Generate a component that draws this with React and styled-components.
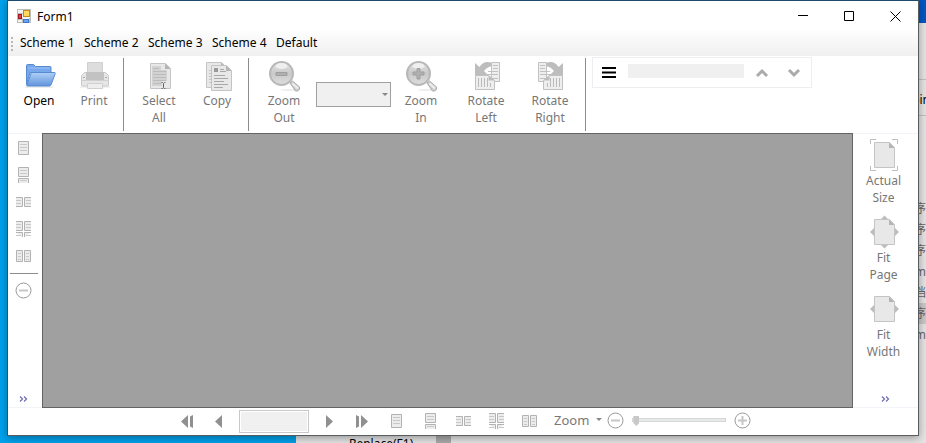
import React from "react";
import styled, { createGlobalStyle } from "styled-components";

const Global = createGlobalStyle`
  * { box-sizing: border-box; }
  html, body, #root { margin: 0; height: 100%; }
  body { overflow: hidden; font: 13px/17px "Noto Sans", "Noto Sans CJK SC", sans-serif; color: #000; }
  button, input, select { font: inherit; color: inherit; }
  button { border: 0; padding: 0; background: none; }
  svg { display: block; flex: none; }
`;

const Desktop = styled.div`
  position: relative;
  height: 100vh;
  padding: 0 7px 7px;
  background: linear-gradient(90deg, #00a2ec, #009de6);
`;

const BackApp = styled.div`
  position: absolute;
  top: 0;
  bottom: 0;
  left: 296px;
  right: 0;
  background: #e4e4e4;
  overflow: hidden;
`;

const BackTitle = styled.div`
  height: 23px;
  background: #0058c4;
`;

const BackField = styled.div`
  margin-top: 56px;
  margin-right: -4px;
  height: 37px;
  padding-top: 11px;
  border: solid #c0c0c0;
  border-width: 1px 0;
  text-align: right;
  font-size: 12px;
  line-height: 17px;
`;

const BackList = styled.div`
  display: flex;
  flex-direction: column;
  align-items: flex-end;
  margin-top: 82px;
  font-size: 12px;
  line-height: 21px;
`;

const BackRow = styled.div`
  width: 100%;
  height: 21px;
  text-align: right;
  color: #666;
  background: ${(p) => (p.$selected ? "#c8c8c8" : "transparent")};
`;

const BackFooter = styled.div`
  position: absolute;
  left: 53px;
  bottom: -9px;
  font-size: 12px;
  line-height: 17px;
`;

const BackScroll = styled.div`
  position: absolute;
  left: 140px;
  bottom: 0;
  width: 15px;
  height: 8px;
  background: #aaa;
`;

const Window = styled.main`
  position: relative;
  display: flex;
  flex-direction: column;
  height: 100%;
  border: 1px solid #5a5d60;
  border-top-color: #1a4a6c;
  border-left-color: #12577c;
  background: #fff;
  box-shadow: 0 2px 8px rgba(0, 0, 0, 0.35);
`;

const TitleBar = styled.header`
  display: flex;
  align-items: center;
  height: 30px;
  padding-left: 9px;
`;

const Title = styled.h1`
  flex: 1;
  margin: 0 0 0 5px;
  font-size: 12px;
  font-weight: 400;
  line-height: 17px;
`;

const CaptionButton = styled.button`
  display: grid;
  place-items: center;
  width: 46px;
  height: 28px;
`;

const MenuBar = styled.nav`
  display: flex;
  align-items: center;
  gap: 8px;
  height: 25px;
  padding-left: 3px;
  background: linear-gradient(#fdfdfd, #f0f0f0);
`;

const Grip = styled.span`
  width: 2px;
  height: 14px;
  margin-right: -1px;
  background: repeating-linear-gradient(#b8b8b8 0 2px, transparent 2px 4px);
`;

const MenuItem = styled.button`
  min-width: 56px;
  height: 19px;
  padding-bottom: 2px;
  font-size: 12px;
  text-align: left;
  white-space: nowrap;
`;

const Toolbar = styled.div`
  display: flex;
  height: 77px;
  padding: 2px 3px 0;
`;

const Divider = styled.div`
  width: 1px;
  height: 73px;
  margin-left: ${(p) => p.$before || 0}px;
  margin-right: ${(p) => p.$after || 0}px;
  background: #8c8c8c;
`;

const Tool = styled.button`
  display: flex;
  flex-direction: column;
  align-items: center;
  width: ${(p) => p.$width}px;
  height: 73px;
  padding-top: 2px;
  font-size: 12px;
  line-height: 17px;
  color: ${(p) => (p.$enabled ? "#000" : "#777")};
`;

const ToolLabel = styled.span`
  width: min-content;
`;

const ZoomBox = styled.div`
  position: relative;
  display: flex;
  align-items: center;
  width: 75px;
  height: 25px;
  margin-top: 24px;
`;

const ZoomSelect = styled.select`
  appearance: none;
  width: 100%;
  height: 100%;
  border: 1px solid #a0a0a0;
  border-radius: 0;
  background: #f0f0f0;
  opacity: 1;
`;

const SelectArrow = styled.span`
  position: absolute;
  right: 3px;
  pointer-events: none;
`;

const Search = styled.form`
  display: flex;
  align-items: center;
  width: 220px;
  height: 31px;
  margin-left: 6px;
  margin-top: -1px;
  padding-left: 8px;
  border: 1px solid #eeeef2;
`;

const SearchButton = styled.button`
  display: grid;
  place-items: center;
  width: ${(p) => p.$width || 32}px;
  height: 28px;
`;

const SearchInput = styled.input`
  width: 116px;
  height: 14px;
  margin: 0 2px 3px 11px;
  border: 0;
  background: #f0f0f0;
`;

const Workspace = styled.div`
  display: flex;
  flex: 1;
  min-height: 0;
`;

const SideBar = styled.aside`
  display: flex;
  flex-direction: column;
  align-items: center;
  width: ${(p) => p.$width}px;
  padding-top: ${(p) => p.$top}px;
  border: solid #f3f4fa;
  border-width: 1px 0;
`;

const SideButton = styled.button`
  display: grid;
  place-items: center;
  width: 30px;
  height: 27px;
  margin-right: 4px;
`;

const SideLine = styled.div`
  width: 28px;
  height: 1px;
  margin: 3px 3px 3px 0;
  background: #8c8c8c;
`;

const More = styled.button`
  height: 17px;
  margin: auto ${(p) => p.$right || 0}px 0 0;
`;

const Canvas = styled.section`
  flex: 1;
  border: 1px solid #646464;
  background: #a0a0a0;
`;

const FitTool = styled(Tool)`
  height: 77px;
  margin-right: 4px;
`;

const StatusBar = styled.footer`
  display: flex;
  align-items: center;
  height: 27px;
  padding-left: 162px;
`;

const NavButton = styled.button`
  display: grid;
  place-items: center;
  width: ${(p) => p.$width || 33}px;
  height: 24px;
`;

const PageInput = styled.input`
  width: 70px;
  height: 23px;
  margin: 0 3px 0 5px;
  padding: 0 2px;
  border: 1px solid #c8c8c8;
  background: #f0f0f0;
  box-shadow: inset 0 0 0 1px #fff;
`;

const ZoomMenu = styled.button`
  display: flex;
  align-items: center;
  gap: 7px;
  height: 20px;
  margin: 0 5px 3px 8px;
  color: #777;
`;

const Slider = styled.input`
  appearance: none;
  width: 94px;
  height: 16px;
  margin: 0 8px 3px;
  background: none;
  &::-webkit-slider-runnable-track {
    height: 4px;
    border: 1px solid #d6d6d6;
    background: #e7eaea;
  }
  &::-webkit-slider-thumb {
    appearance: none;
    width: 6px;
    height: 10px;
    margin-top: -3px;
    background: #c8c8c8;
    clip-path: polygon(0 0, 100% 0, 100% 70%, 50% 100%, 0 70%);
  }
`;

const StatusIconButton = styled.button`
  padding-bottom: 2px;
`;

const AppIcon = () => (
  <svg width="15" height="15" viewBox="0 0 15 15" shapeRendering="crispEdges">
    <path d="M.5.5h13v13H.5z" fill="#f2f2f2" stroke="#bdbdbd" />
    <path d="M.5 4.500h6M.5 10.500h6M5.500 9v5M12.500 9v5" stroke="#bdbdbd" />
    <path d="M1.500 5.500h3v4h-3z" fill="#e04040" stroke="#a01818" />
    <path d="M6.500 1.500h6v6h-6z" fill="#ffd860" stroke="#c28b18" />
    <path d="M6.500 10.500h5v3h-5z" fill="#66a4f4" stroke="#3f76c8" />
  </svg>
);

const OpenIcon = () => (
  <svg width="34" height="32" viewBox="0 0 34 32">
    <defs><linearGradient id="folder" x1="0" y1="0" x2="0" y2="1"><stop stopColor="#b0cff8" /><stop offset="1" stopColor="#6294dc" /></linearGradient></defs>
    <path d="M3 26h28v2H3z" fill="#eee" />
    <path d="M4.500 5.500q0-1 1-1h6l2 2h14.500q1 0 1 1v5H8l-3.500 12z" fill="#78a8ec" stroke="#568bd1" />
    <path d="M6 8h22" stroke="#9dc0f3" />
    <path d="M9 13.500q.5-1 1.500-1h22q1 0 .7 1l-4 11q-.5 1.500-2 1.500H5.500q-1 0-.6-1z" fill="url(#folder)" stroke="#568bd1" />
  </svg>
);

const PrintIcon = () => (
  <svg width="32" height="32" viewBox="0 0 32 32">
    <path d="M2 26h30v2H2z" fill="#f1f1f1" />
    <path d="M9.500 13V2.500h15V13" fill="#ddd" stroke="#d0d0d0" />
    <path d="M6.500 12.500h21l3 3V25q0 1-1 1h-25q-1 0-1-1v-9.500z" fill="#e6e6e6" stroke="#cacaca" />
    <rect x="8" y="12" width="18" height="8" fill="#c2c2c2" />
    <path d="M4 20.500h26" stroke="#d0d0d0" />
    <path d="M9.500 23.500h15v5h-15z" fill="#eee" stroke="#d0d0d0" />
    <path d="M5 17.500h2m20 0h2" stroke="#aaa" />
  </svg>
);

const Sheet = ({ lines = true }) => (
  <>
    <path d="M.5.5h15l5 5v20H.5z" fill="#e8e8e8" stroke="#c4c4c4" />
    <path d="M15 .5v5.500h5.500z" fill="#b4b4b4" />
    {lines && <path d="M3 8.500h15m-15 3h15m-15 3h15m-15 3h15m-15 3h12" stroke="#c4c4c4" />}
  </>
);

const SelectIcon = () => (
  <svg width="32" height="32" viewBox="0 0 32 32">
    <g transform="translate(7 3)">
      <Sheet lines={false} />
      <path d="M2 3h9v4h6v11h-5v5H2z" fill="#d2d2d2" />
      <path d="M3 5.500h6m-6 3h13m-13 3h13m-13 3h13m-13 3h13m-13 3h8" stroke="#bcbcbc" />
      <path d="M11.500 19.500h1l1 1 1-1h1m-2 1v4l-1 1h-1m2-1l1 1h1" stroke="#666" fill="none" />
    </g>
  </svg>
);

const CopyIcon = () => (
  <svg width="34" height="32" viewBox="0 0 34 32">
    <g transform="translate(6 2)"><Sheet /></g>
    <g transform="translate(11 5)">
      <Sheet lines={false} />
      <path d="M3 3h4v4H3z" fill="#999" />
      <path d="M9 4.500h4m-4 2h6M3 10.500h11M3 13.500h14M3 16.500h10M3 19.500h14M3 22.500h9" stroke="#a8a8a8" />
    </g>
  </svg>
);

const MagnifierIcon = ({ plus }) => (
  <svg width="32" height="32" viewBox="0 0 32 32">
    <defs>
      <linearGradient id={plus ? "lensIn" : "lensOut"} x1="0" y1="0" x2="0" y2="1">
        <stop stopColor="#e4e4e4" /><stop offset=".5" stopColor="#c9c9c9" /><stop offset="1" stopColor="#dedede" />
      </linearGradient>
    </defs>
    <ellipse cx="22" cy="30" rx="9" ry="1" fill="#eee" />
    <path d="M22 23l2.500-2 7 6v2.500l-2 1.500h-2z" fill="#ccc" stroke="#aaa" />
    <path d="M24.500 23.500l5.500 5" stroke="#eee" strokeWidth="2" />
    <circle cx="13.500" cy="13.500" r="11.500" fill={`url(#${plus ? "lensIn" : "lensOut"})`} stroke="#b8b8b8" strokeWidth="2" />
    <ellipse cx="13.500" cy="6" rx="6" ry="3" fill="#efefef" />
    <path d={plus ? "M12 8.500h3V12h4v3h-4v4h-3v-4H8v-3h4z" : "M8 12.500h11v3H8z"} fill="#b0b0b0" stroke="#9f9f9f" />
  </svg>
);

const RotateIcon = ({ right }) => (
  <svg width="32" height="32" viewBox="0 0 32 32">
    <g transform={right ? "matrix(-1 0 0 1 34 0)" : undefined}>
      <path d="M21.500 2.500h8v19h-8z" fill="#eee" stroke="#c1c1c1" />
      <path d="M23 5.500h5m-5 3h5m-10 3h10m-12 3h12m-6 4h6" stroke="#c1c1c1" />
      <path d="M5 3v12h13l-4-4q3-4 8-5V3q-8-3-12.500 4z" fill="#bdbdbd" />
      <path d="M5.500 15.500h13l6 5v9h-19z" fill="#eee" stroke="#c1c1c1" />
      <path d="M8.500 18v9m3-9v9m3-9v9m3-9v9m3-4v4" stroke="#bbb" />
      <path d="M18.500 15v5.500h6z" fill="#bdbdbd" />
    </g>
  </svg>
);

const FitIcon = ({ kind }) => (
  <svg width="32" height="34" viewBox="0 0 32 34">
    <g transform="translate(6 4)"><Sheet lines={false} /></g>
    {kind === "actual"
      ? <path d="M2.500 6V1.500H8M24 1.500h5.500V6m0 22v4.500H24m-16 0H2.500V28" fill="none" stroke="#bdbdbd" />
      : <path d="M6 13v8l-4-4zM27 13v8l4-4z" fill="#bdbdbd" />}
    {kind === "page" && <path d="M13 4l3.500-3.500L20 4zM13 30l3.500 3.500L20 30z" fill="#bdbdbd" />}
  </svg>
);

const layouts = {
  single: { pages: "M3.500 1.500h10v13h-10z", rules: "M5 4.500h7m-7 3h7m-7 3h7" },
  continuous: { pages: "M3.500.5h10v9h-10zM3.500 16v-4.500h10V16", rules: "M5 3.500h7m-7 3h7m-7 7h7" },
  facing: { pages: "M1 3.500h6.500v9H1M16 3.500H9.500v9H16", rules: "M1 6.500h5m-5 3h5m5-3h5m-5 3h5" },
  continuousFacing: {
    pages: "M1 .5h6.500v9H1M16 .5H9.500v9H16M1 11.500h6.500V16M16 11.500H9.500V16",
    rules: "M1 3.500h5m-5 3h5m5-3h5m-5 3h5M1 14.500h5m5 0h5",
  },
  book: { pages: "M1.500 2.500h6v11h-6zM9.500 2.500h6v11h-6z", rules: "M3 5.500h3m-3 3h3m-3 3h3m5-6h3m-3 3h3m-3 3h3" },
};

const LayoutIcon = ({ kind }) => (
  <svg width="17" height="17" viewBox="0 0 17 17">
    <path d={layouts[kind].pages} fill="#ececec" stroke="#b2b2b2" />
    <path d={layouts[kind].rules} stroke="#c8c8c8" />
  </svg>
);

const CircleIcon = ({ plus }) => (
  <svg width="17" height="17" viewBox="0 0 17 17" fill="none">
    <circle cx="8.500" cy="8.500" r="7.500" stroke="#999" />
    <path d={plus ? "M4 8.500h9M8.500 4v9" : "M4 8.500h9"} stroke="#c6c6c6" strokeWidth="2" />
  </svg>
);

const MoreIcon = () => (
  <svg width="9" height="6" viewBox="0 0 9 6" fill="none" stroke="#7272b0"><path d="M1 .5L3.500 3 1 5.500M5 .5L7.500 3 5 5.500" strokeWidth="1.300" /></svg>
);

const DownIcon = () => <svg width="6" height="4" viewBox="0 0 6 4"><path d="M0 0h6L3 3z" fill="#888" /></svg>;

const ArrowIcon = ({ right, bar }) => (
  <svg width="14" height="13" viewBox="0 0 14 13">
    <g transform={right ? "matrix(-1 0 0 1 14 0)" : undefined} fill="#909090">
      <path d={bar ? "M1 6.500L8 0v13zM10 1.500L13 0v13l-3-1.500z" : "M3 6.500L10 0v13z"} />
    </g>
  </svg>
);

const ChevronIcon = ({ down }) => (
  <svg width="14" height="10" viewBox="0 0 14 10" fill="none"><path d={down ? "M2 2l5 5 5-5" : "M2 8l5-5 5 5"} stroke="#ababab" strokeWidth="3" /></svg>
);

const layoutLabels = { single: "Single page", continuous: "Continuous", facing: "Facing", continuousFacing: "Continuous facing", book: "Book view" };
const kinds = Object.keys(layouts);

const ToolItem = ({ width, label, icon, enabled }) => (
  <Tool type="button" $width={width} $enabled={enabled}>{icon}<ToolLabel>{label}</ToolLabel></Tool>
);

export default function App() {
  return (
    <>
      <Global />
      <Desktop>
        <BackApp aria-hidden="true">
          <BackTitle />
          <BackField>oin</BackField>
          <BackList>
            <BackRow>序</BackRow>
            <BackRow>序</BackRow>
            <BackRow>序</BackRow>
            <BackRow>m</BackRow>
            <BackRow>档</BackRow>
            <BackRow $selected>序</BackRow>
            <BackRow>m</BackRow>
          </BackList>
          <BackFooter>Replace(F1)</BackFooter>
          <BackScroll />
        </BackApp>
        <Window>
          <TitleBar>
            <AppIcon />
            <Title>Form1</Title>
            <CaptionButton aria-label="Minimize"><svg width="11" height="11"><path d="M0 4.500h10" stroke="#000" /></svg></CaptionButton>
            <CaptionButton aria-label="Maximize"><svg width="11" height="11"><path d="M.5.5h9v9h-9z" stroke="#000" fill="none" /></svg></CaptionButton>
            <CaptionButton aria-label="Close"><svg width="11" height="11"><path d="M.5.5l10 10m0-10l-10 10" stroke="#000" /></svg></CaptionButton>
          </TitleBar>
          <MenuBar>
            <Grip />
            {["Scheme 1", "Scheme 2", "Scheme 3", "Scheme 4", "Default"].map((t) => <MenuItem key={t}>{t}</MenuItem>)}
          </MenuBar>
          <Toolbar>
            <ToolItem width={56} label="Open" icon={<OpenIcon />} enabled />
            <ToolItem width={54} label="Print" icon={<PrintIcon />} />
            <Divider $before={2} />
            <ToolItem width={70} label="Select All" icon={<SelectIcon />} />
            <ToolItem width={46} label="Copy" icon={<CopyIcon />} />
            <Divider $before={8} $after={3} />
            <ToolItem width={64} label="Zoom Out" icon={<MagnifierIcon />} />
            <ZoomBox>
              <ZoomSelect aria-label="Zoom level" disabled />
              <SelectArrow><DownIcon /></SelectArrow>
            </ZoomBox>
            <ToolItem width={60} label="Zoom In" icon={<MagnifierIcon plus />} />
            <ToolItem width={70} label="Rotate Left" icon={<RotateIcon />} />
            <ToolItem width={58} label="Rotate Right" icon={<RotateIcon right />} />
            <Divider $before={6} />
            <Search>
              <SearchButton type="button" $width={16} aria-label="Search options"><svg width="14" height="11"><path d="M0 1h14M0 5.500h14M0 10h14" stroke="#000" strokeWidth="2" /></svg></SearchButton>
              <SearchInput aria-label="Search text" disabled />
              <SearchButton type="button" aria-label="Previous match"><ChevronIcon /></SearchButton>
              <SearchButton type="button" aria-label="Next match"><ChevronIcon down /></SearchButton>
            </Search>
          </Toolbar>
          <Workspace>
            <SideBar $width={34} $top={1}>
              {kinds.map((k) => <SideButton key={k} aria-label={layoutLabels[k]}><LayoutIcon kind={k} /></SideButton>)}
              <SideLine />
              <SideButton aria-label="Zoom out"><CircleIcon /></SideButton>
              <More $right={4} aria-label="More view tools"><MoreIcon /></More>
            </SideBar>
            <Canvas aria-label="Document" />
            <SideBar $width={65} $top={2}>
              <FitTool $width={60}><FitIcon kind="actual" /><ToolLabel>Actual Size</ToolLabel></FitTool>
              <FitTool $width={60}><FitIcon kind="page" /><ToolLabel>Fit Page</ToolLabel></FitTool>
              <FitTool $width={60}><FitIcon kind="width" /><ToolLabel>Fit Width</ToolLabel></FitTool>
              <More aria-label="More fit tools"><MoreIcon /></More>
            </SideBar>
          </Workspace>
          <StatusBar>
            <NavButton aria-label="First page"><ArrowIcon bar /></NavButton>
            <NavButton $width={31} aria-label="Previous page"><ArrowIcon /></NavButton>
            <PageInput aria-label="Page number" disabled />
            <NavButton aria-label="Next page"><ArrowIcon right /></NavButton>
            <NavButton aria-label="Last page"><ArrowIcon right bar /></NavButton>
            <NavButton $width={36} aria-label="Single page"><LayoutIcon kind="single" /></NavButton>
            {kinds.slice(1).map((k) => <NavButton key={k} aria-label={layoutLabels[k]}><LayoutIcon kind={k} /></NavButton>)}
            <ZoomMenu>Zoom<DownIcon /></ZoomMenu>
            <StatusIconButton aria-label="Zoom out"><CircleIcon /></StatusIconButton>
            <Slider type="range" defaultValue="0" aria-label="Zoom" />
            <StatusIconButton aria-label="Zoom in"><CircleIcon plus /></StatusIconButton>
          </StatusBar>
        </Window>
      </Desktop>
    </>
  );
}
